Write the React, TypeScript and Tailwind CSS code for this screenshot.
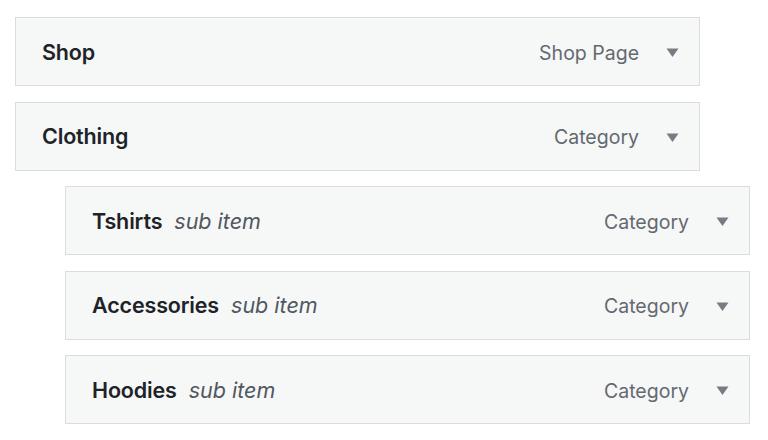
import React from "react";

type Item = { title: string; type: string; sub?: boolean };

const items: Item[] = [
  { title: "Shop", type: "Shop Page" },
  { title: "Clothing", type: "Category" },
  { title: "Tshirts", type: "Category", sub: true },
  { title: "Accessories", type: "Category", sub: true },
  { title: "Hoodies", type: "Category", sub: true },
];

function Arrow() {
  return (
    <svg width="13" height="9" viewBox="0 0 13 9" className="block">
      <path d="M0.5 0.5 L12.5 0.5 L6.5 9 Z" fill="#787c82" />
    </svg>
  );
}

export default function App() {
  return (
    <div
      className="w-[768px] h-[440px] bg-white overflow-hidden pt-[17px] pl-[15px] flex flex-col gap-[15.5px]"
      style={{ fontFamily: "Inter, 'Noto Sans', sans-serif" }}
    >
      {items.map((it) => (
        <div
          key={it.title}
          className={`${it.sub ? "ml-[50px]" : ""} w-[685px] h-[69px] shrink-0 bg-[#f6f7f7] border border-[#dcdcde] flex items-center pl-[26px] pr-[20px] pt-[1px]`}
        >
          <div className="flex-1 flex items-baseline">
            <span className="text-[21.5px] font-semibold text-[#1d2327] tracking-[-0.15px]">
              {it.title}
            </span>
            {it.sub && (
              <span className="ml-[12px] text-[21.5px] italic text-[#50575e]">sub item</span>
            )}
            <span className="ml-auto text-[19.5px] text-[#646970]">{it.type}</span>
          </div>
          <span className="ml-[27px] mt-[1px]">
            <Arrow />
          </span>
        </div>
      ))}
    </div>
  );
}
